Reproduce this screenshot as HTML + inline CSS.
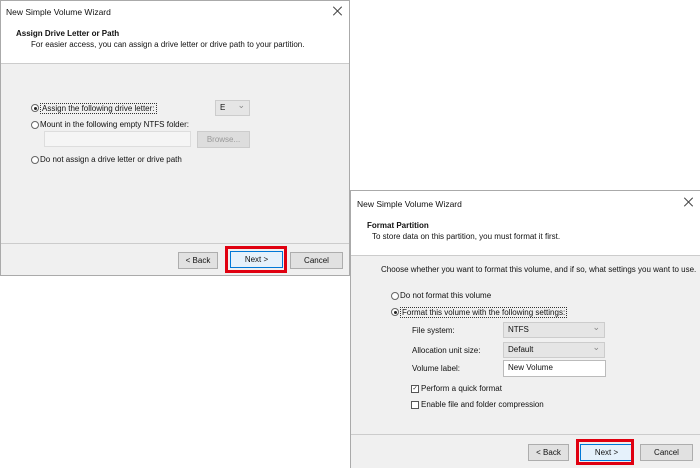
<!DOCTYPE html><html><head><style>
body{margin:0;width:700px;height:467px;background:#fff;position:relative;overflow:hidden;font-family:"Liberation Sans",sans-serif;font-size:8px;color:#111}
*{box-sizing:content-box}
.a{position:absolute;white-space:nowrap}
.dlg{position:absolute;background:#f0f0f0;border:1px solid #aaa}
.hd{position:absolute;left:0;right:0;top:0;background:#fff;border-bottom:1px solid #ccc}
.btn{position:absolute;background:#e1e1e1;border:1px solid #adadad;text-align:center;line-height:15px;height:15px}
.nx{background:#e5f1fb;border-color:#0078d7}
.red{position:absolute;border:3px solid #e00010}
.rad{position:absolute;width:6px;height:6px;border:1px solid #666;border-radius:50%;background:#fff}
.rad.on::after{content:"";position:absolute;left:1.5px;top:1.5px;width:3px;height:3px;border-radius:50%;background:#222}
.dd{position:absolute;background:#e5e5e5;border:1px solid #ccc;height:14px;line-height:14px;padding-left:4px}
.dd::after{content:"⌄";position:absolute;right:4px;top:-3px;color:#888;font-size:9px}
.tb{position:absolute;background:#fff;border:1px solid #bbb;height:15px;line-height:13px;padding-left:4px}
.cb{position:absolute;width:6px;height:6px;border:1px solid #555;background:#fff;font-size:6px;line-height:6px;text-align:center}
.x{position:absolute;width:10px;height:10px}
.x::before,.x::after{content:"";position:absolute;left:4px;top:-1px;width:1px;height:12px;background:#444;transform:rotate(45deg)}
.x::after{transform:rotate(-45deg)}
</style></head><body>
<div class="dlg" style="left:0;top:0;width:348px;height:274px">
<div class="hd" style="height:62px"></div>
<div style="position:absolute;left:0;right:0;top:242px;border-top:1px solid #ccc"></div>
</div>
<div class="a" style="left:6px;top:7px;font-size:8.5px">New Simple Volume Wizard</div>
<div class="x" style="left:333px;top:6px"></div>
<div class="a" style="left:16px;top:29px;font-weight:bold">Assign Drive Letter or Path</div>
<div class="a" style="left:31px;top:40px">For easier access, you can assign a drive letter or drive path to your partition.</div>
<div class="rad on" style="left:31px;top:104px"></div>
<div class="a" style="left:40px;top:103px;border:1px dotted #333;padding:0 1px">Assign the following drive letter:</div>
<div class="dd" style="left:215px;top:100px;width:29px">E</div>
<div class="rad" style="left:31px;top:121px"></div>
<div class="a" style="left:40px;top:120px">Mount in the following empty NTFS folder:</div>
<div class="tb" style="left:44px;top:131px;width:141px;height:14px;background:#f5f5f5;border-color:#ddd"></div>
<div class="btn" style="left:197px;top:131px;width:51px;color:#999;border-color:#ccc;background:#ddd">Browse...</div>
<div class="rad" style="left:31px;top:156px"></div>
<div class="a" style="left:40px;top:155px">Do not assign a drive letter or drive path</div>
<div class="btn" style="left:178px;top:252px;width:38px">&lt; Back</div>
<div class="btn nx" style="left:230px;top:251px;width:51px">Next &gt;</div>
<div class="btn" style="left:290px;top:252px;width:51px">Cancel</div>
<div class="red" style="left:225px;top:246px;width:56px;height:21px"></div>

<div class="dlg" style="left:350px;top:190px;width:350px;height:277px;border-right:none;border-bottom:none">
<div class="hd" style="height:64px"></div>
<div style="position:absolute;left:0;right:0;top:243px;border-top:1px solid #ccc"></div>
</div>
<div class="a" style="left:357px;top:199px;font-size:8.5px">New Simple Volume Wizard</div>
<div class="x" style="left:684px;top:197px"></div>
<div class="a" style="left:367px;top:221px;font-weight:bold">Format Partition</div>
<div class="a" style="left:372px;top:232px">To store data on this partition, you must format it first.</div>
<div class="a" style="left:381px;top:265px">Choose whether you want to format this volume, and if so, what settings you want to use.</div>
<div class="rad" style="left:391px;top:292px"></div>
<div class="a" style="left:400px;top:291px">Do not format this volume</div>
<div class="rad on" style="left:391px;top:308px"></div>
<div class="a" style="left:400px;top:307px;border:1px dotted #333;padding:0 1px">Format this volume with the following settings:</div>
<div class="a" style="left:412px;top:326px">File system:</div>
<div class="dd" style="left:503px;top:322px;width:96px">NTFS</div>
<div class="a" style="left:412px;top:346px">Allocation unit size:</div>
<div class="dd" style="left:503px;top:342px;width:96px">Default</div>
<div class="a" style="left:412px;top:364px">Volume label:</div>
<div class="tb" style="left:503px;top:360px;width:97px">New Volume</div>
<div class="cb" style="left:411px;top:385px">✓</div>
<div class="a" style="left:421px;top:384px">Perform a quick format</div>
<div class="cb" style="left:411px;top:401px"></div>
<div class="a" style="left:421px;top:400px">Enable file and folder compression</div>
<div class="btn" style="left:528px;top:444px;width:39px">&lt; Back</div>
<div class="btn nx" style="left:580px;top:444px;width:51px">Next &gt;</div>
<div class="btn" style="left:640px;top:444px;width:51px">Cancel</div>
<div class="red" style="left:576px;top:439px;width:52px;height:20px"></div>
</body></html>
